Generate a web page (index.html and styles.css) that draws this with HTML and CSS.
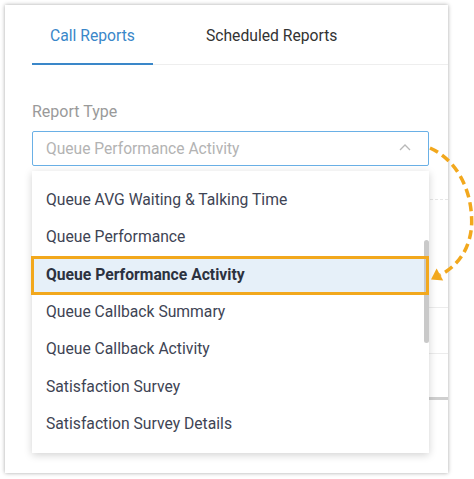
FILE: index.html
```html
<!DOCTYPE html>
<html>
<head>
	<meta charset="utf-8">
	<title>Call Reports</title>
	<link rel="stylesheet" href="styles.css">
</head>
<body>
<main class="card">
	<nav class="tabs">
		<div class="tab active">Call Reports</div>
		<div class="tab">Scheduled Reports</div>
	</nav>

	<section class="form">
		<div class="label">Report Type</div>
		<div class="select">
			<span class="placeholder">Queue Performance Activity</span>
			<svg class="chevron" width="12" height="8" viewBox="0 0 12 8"><path d="M1 7 L6 2 L11 7" fill="none" stroke="#b8b8b8" stroke-width="1.3"/></svg>
		</div>
	</section>

	<!-- table rows behind the popup -->
	<div class="rows">
		<div class="row dotted"></div>
		<div class="row r2"></div>
		<div class="row r3"></div>
		<div class="row bar"></div>
	</div>

	<ul class="dropdown">
		<li>Queue AVG Waiting &amp; Talking Time</li>
		<li>Queue Performance</li>
		<li class="selected">Queue Performance Activity</li>
		<li>Queue Callback Summary</li>
		<li>Queue Callback Activity</li>
		<li>Satisfaction Survey</li>
		<li>Satisfaction Survey Details</li>
		<div class="scrollbar"></div>
	</ul>
</main>

<svg class="arrow" width="60" height="160" viewBox="0 0 60 160">
	<path d="M7 18 C 30 28, 49 55, 48.7 93 C 48 118, 35 136, 17 145" fill="none" stroke="#f2a81d" stroke-width="3.5" stroke-dasharray="9 5"/>
	<path d="M8 149.5 L13.6 138.6 L20.2 150.4 Z" fill="#f2a81d"/>
</svg>
</body>
</html>
```

FILE: styles.css
```css
body {
	margin: 0;
	background-color: #fff;
	font-family: Roboto, "Liberation Sans", sans-serif;
	color: #3b4252;
}

.card {
	position: relative;
	margin: 5px;
	width: 443px;
	height: 468px;
	background: #fff;
	box-shadow: 0 0 4px rgba(0, 0, 0, 0.35);
}

.tabs {
	display: flex;
	gap: 35px;
	margin-left: 27px;
	height: 59px;
	border-bottom: 1px solid #eeeeee;
}

.tab {
	padding: 0 18px;
	font-size: 15.7px;
	line-height: 62px;
	color: #333;
}

.tab.active {
	color: #3a87c9;
	border-bottom: 2px solid #3a87c9;
	margin-bottom: -1px;
}

.form {
	padding: 0 19px 0 27px;
}

.label {
	margin-top: 37px;
	font-size: 16px;
	line-height: 20px;
	color: #9a9a9a;
}

.select {
	display: flex;
	align-items: center;
	justify-content: space-between;
	margin-top: 9px;
	height: 33px;
	border: 1px solid #6ab0e6;
	border-radius: 2px;
	padding: 0 17px 0 13px;
}

.placeholder {
	font-size: 15.6px;
	color: #b3b3b3;
}

.chevron {
	margin-top: -3px;
}

.rows {
	position: absolute;
	left: 27px;
	right: 0;
	top: 166px;
}

.row {
	position: absolute;
	left: 0;
	right: 0;
	border-top: 1px solid #ececec;
}

.row.dotted {
	top: 28px;
	border-top: 1px dashed #e6e6e6;
}

.row.r2 {
	top: 136px;
}

.row.r3 {
	top: 182px;
}

.row.bar {
	top: 226px;
	border-top: 3px solid #cfcfcf;
}

.dropdown {
	position: absolute;
	left: 27px;
	top: 166px;
	width: 397px;
	height: 282px;
	margin: 0;
	padding: 10px 0 0;
	box-sizing: border-box;
	list-style: none;
	background: #fff;
	box-shadow: 0 2px 8px rgba(0, 0, 0, 0.18);
	z-index: 2;
}

.dropdown li {
	position: relative;
	height: 37.33px;
	line-height: 37.33px;
	padding-left: 14px;
	font-size: 15.7px;
	color: #3e4454;
}

.dropdown li.selected {
	background: #e6f0f9;
	font-weight: bold;
	color: #2c3240;
}

.dropdown li.selected::after {
	content: "";
	position: absolute;
	left: -1px;
	right: 0;
	top: 0;
	bottom: -2px;
	border: 3px solid #f2a81d;
	z-index: 3;
}

.scrollbar {
	position: absolute;
	right: 0;
	top: 69px;
	width: 5px;
	height: 103px;
	border-radius: 3px;
	background: #c9c9c9;
}

.arrow {
	position: absolute;
	left: 423px;
	top: 130px;
	z-index: 5;
}
```
